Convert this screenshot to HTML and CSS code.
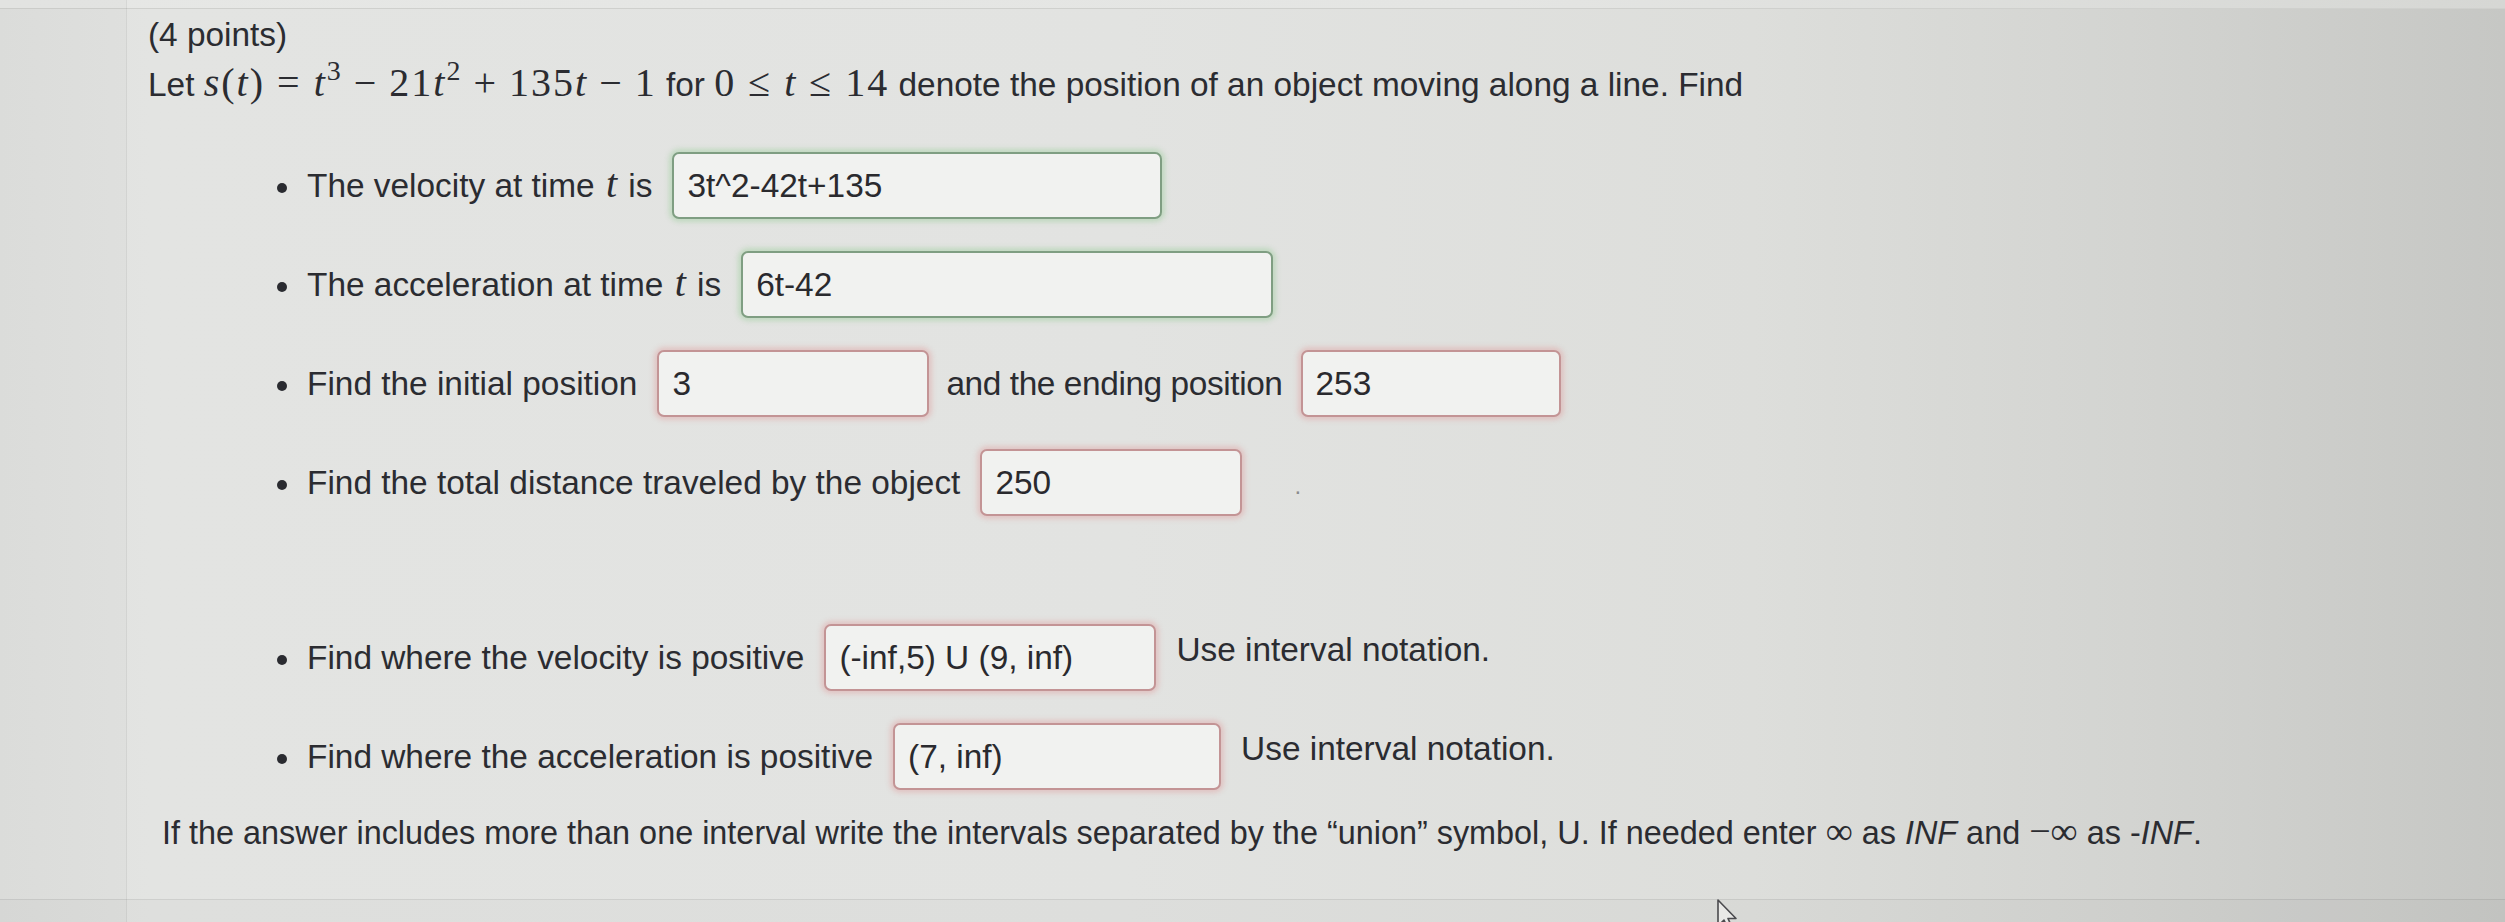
FILE: index.html
```html
<!DOCTYPE html>
<html lang="en">
<head>
<meta charset="utf-8">
<title>Problem</title>
<link rel="stylesheet" href="styles.css">
</head>
<body>
<div class="screen">
  <div class="topband"></div>
  <div class="gutter"></div>
  <main class="problem">
    <p class="line">(4 points)</p>
    <p class="line">Let <span class="math"><i>s</i>(<i>t</i>)<span class="rel">=</span><i>t</i><sup>3</sup><span class="bin">−</span>21<i>t</i><sup>2</sup><span class="bin">+</span>135<i>t</i><span class="bin">−</span>1</span> for <span class="math">0<span class="rel">≤</span><i>t</i><span class="rel">≤</span>14</span> denote the position of an object moving along a line. Find</p>

    <ul class="parts">
      <li class="part">
        <span class="dot"></span>
        <span class="label">The velocity at time <i class="mv">t</i> is</span>
        <span class="answer good ans-velocity">3t^2-42t+135</span>
      </li>
      <li class="part">
        <span class="dot"></span>
        <span class="label">The acceleration at time <i class="mv">t</i> is</span>
        <span class="answer good ans-accel">6t-42</span>
      </li>
      <li class="part">
        <span class="dot"></span>
        <span class="label">Find the initial position</span>
        <span class="answer bad ans-initial">3</span>
        <span class="label label-tight">and the ending position</span>
        <span class="answer bad ans-ending">253</span>
      </li>
      <li class="part">
        <span class="dot"></span>
        <span class="label">Find the total distance traveled by the object</span>
        <span class="answer bad ans-distance">250</span>
        <span class="speck">.</span>
      </li>
      <li class="part part-gap">
        <span class="dot"></span>
        <span class="label">Find where the velocity is positive</span>
        <span class="answer bad ans-velpos">(-inf,5) U (9, inf)</span>
        <span class="hint">Use interval notation.</span>
      </li>
      <li class="part">
        <span class="dot"></span>
        <span class="label">Find where the acceleration is positive</span>
        <span class="answer bad ans-accpos">(7, inf)</span>
        <span class="hint">Use interval notation.</span>
      </li>
    </ul>

    <p class="note">If the answer includes more than one interval write the intervals separated by the “union” symbol, U. If needed enter <span class="math">∞</span> as <i>INF</i> and <span class="math">−∞</span> as -<i>INF</i>.</p>
  </main>
  <div class="bottomline"></div>
  <svg class="cursor" width="24" height="34" viewBox="0 0 24 34" aria-hidden="true">
    <path d="M2 2 L2 28 L8 22 L12.5 32 L16.5 30.2 L12 20.5 L20 20.5 Z" fill="#e9e9e7" stroke="#4a4a4e" stroke-width="1.6" stroke-linejoin="round"/>
  </svg>
</div>
</body>
</html>
```

FILE: styles.css
```css
* { box-sizing: border-box; }

html, body {
  margin: 0;
  padding: 0;
  width: 2505px;
  height: 922px;
  overflow: hidden;
}

body {
  font-family: "Liberation Sans", Arial, sans-serif;
  color: #2b2c31;
}

.screen {
  position: relative;
  width: 2505px;
  height: 922px;
  overflow: hidden;
  background: linear-gradient(to right, #dfe0de 0%, #e3e4e2 6%, #e2e3e1 45%, #dddedb 70%, #d3d4d1 85%, #c6c7c4 100%);
}

.topband {
  position: absolute;
  left: 0;
  top: 0;
  width: 100%;
  height: 9px;
  background: linear-gradient(to right, #e6e7e5, #e4e5e3 60%, #d6d7d4);
  border-bottom: 1px solid #cfd0cd;
}

.gutter {
  position: absolute;
  left: 0;
  top: 0;
  width: 127px;
  height: 100%;
  background: rgba(0, 0, 0, 0.015);
  border-right: 1px solid rgba(0, 0, 0, 0.05);
}

.bottomline {
  position: absolute;
  left: 0;
  top: 899px;
  width: 100%;
  height: 23px;
  border-top: 1px solid rgba(0, 0, 0, 0.07);
  background: rgba(0, 0, 0, 0.02);
}

.problem {
  position: relative;
  padding: 10px 0 0 148px;
  font-size: 33.4px;
}

.line {
  margin: 0;
  line-height: 50px;
  white-space: nowrap;
}

.math {
  font-family: "Liberation Serif", "Times New Roman", serif;
  font-size: 40px;
  letter-spacing: 2px;
  line-height: 0;
  white-space: nowrap;
}

.math i, .mv {
  font-family: "Liberation Serif", "Times New Roman", serif;
  font-style: italic;
}

.mv {
  font-size: 40px;
  line-height: 0;
  margin: 0 2px;
}

.math sup {
  font-size: 28px;
  line-height: 0;
  vertical-align: 16px;
}

.rel { margin: 0 12px; }
.bin { margin: 0 11px; }

.parts {
  list-style: none;
  margin: 42px 0 0 0;
  padding: 0 0 0 129px;
  display: flex;
  flex-direction: column;
  gap: 32px;
}

.part {
  display: flex;
  align-items: baseline;
  gap: 20px;
  height: 67px;
  white-space: nowrap;
}

.part-gap { margin-top: 76px; }

.dot {
  flex: none;
  width: 10px;
  height: 10px;
  border-radius: 50%;
  background: #2a2b30;
  align-self: center;
  position: relative;
  top: 2px;
}

.label-tight {
  letter-spacing: -0.4px;
  margin-left: -3px;
  margin-right: -2px;
}

.answer {
  flex: none;
  display: block;
  height: 67px;
  line-height: 63px;
  padding: 0 13px;
  border-radius: 7px;
  background: #f1f2f0;
  color: #2a2a2e;
  border: 2px solid;
}

.good {
  border-color: #7f9e82;
  box-shadow: 0 0 5px 3px rgba(150, 205, 150, 0.45);
}

.bad {
  border-color: #c39495;
  box-shadow: 0 0 5px 3px rgba(225, 160, 160, 0.45);
}

.ans-velocity { width: 490px; }
.ans-accel { width: 532px; }
.ans-initial { width: 272px; }
.ans-ending { width: 260px; }
.ans-distance { width: 262px; }
.ans-velpos { width: 332px; }
.ans-accpos { width: 328px; }

.hint {
  align-self: flex-start;
  margin-top: 7px;
}

.speck {
  margin-left: 32px;
  color: #8a8b8e;
  font-size: 24px;
}

.note {
  margin: 18px 0 0 14px;
  line-height: 50px;
  font-size: 32.4px;
  white-space: nowrap;
}

.note .math {
  font-size: 38px;
  letter-spacing: 0;
}

.cursor {
  position: absolute;
  left: 1716px;
  top: 898px;
}
```
